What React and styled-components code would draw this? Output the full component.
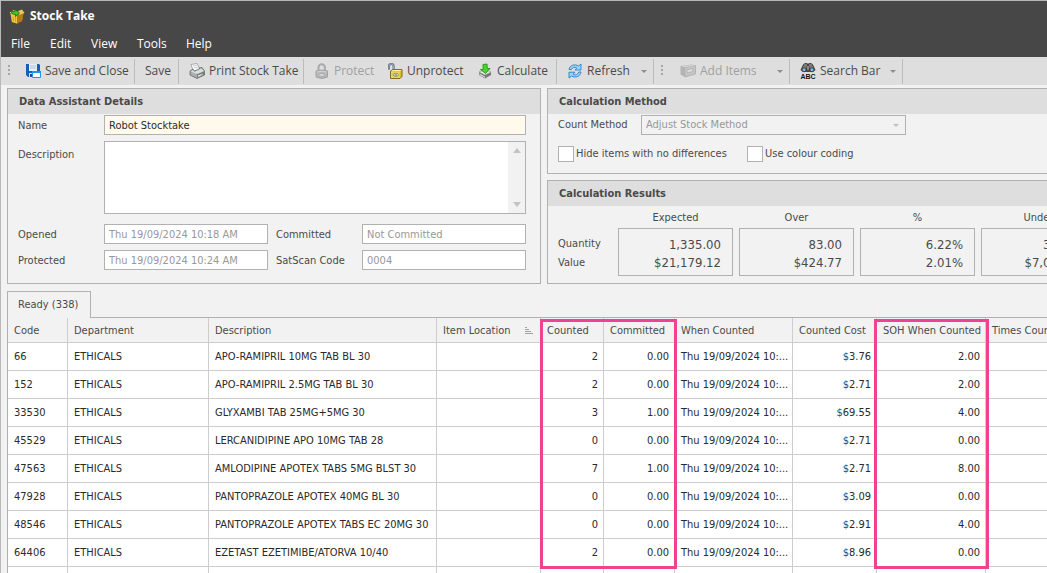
import React from 'react';
import styled, { createGlobalStyle } from 'styled-components';

const line = '#b1b1b1';
const gridLine = '#cdcdcd';
const ui = '"Segoe UI", "Open Sans", "Noto Sans", sans-serif';
const body = 'Tahoma, "DejaVu Sans Condensed", "Noto Sans", sans-serif';

const Global = createGlobalStyle`
  * { box-sizing: border-box; }
  body { margin: 0; background: #f2f2f2; overflow: hidden; }
  button, input, select, textarea { font: inherit; color: inherit; margin: 0; border-radius: 0; outline: none; }
`;

const Window = styled.div`
  height: 100vh;
  overflow: hidden;
  display: flex;
  flex-direction: column;
  border-left: 1px solid #b9b9b9;
  border-top: 1px solid #b4b8ba;
  background: #f2f2f2;
  color: #4a4a4a;
  font: 11px/16px ${body};
`;

const TitleBar = styled.header`
  display: flex;
  flex: none;
  align-items: center;
  gap: 5px;
  height: 30px;
  padding-left: 8px;
  background: #474747;
  color: #fff;
`;

const Title = styled.h1`
  margin: 0;
  font: bold 12px/16px ${ui};
`;

const MenuBar = styled.nav`
  display: flex;
  flex: none;
  height: 26px;
  background: #474747;
`;

const MenuItem = styled.button`
  flex: none;
  width: ${(p) => p.$width}px;
  padding: 0 0 0 10px;
  border: 0;
  background: none;
  color: #fff;
  text-align: left;
  font: 12px/26px ${ui};
`;

const ToolBar = styled.div`
  display: flex;
  flex: none;
  align-items: center;
  height: 28px;
  background: #dedede;
  font: 12px/16px ${ui};
`;

const Grip = styled.span`
  flex: none;
  width: ${(p) => p.$width}px;
  height: 12px;
  padding-left: 7px;
  &::before {
    content: '';
    display: block;
    width: 2px;
    height: 10px;
    background: repeating-linear-gradient(#a6a6a6 0 2px, transparent 2px 4px);
  }
`;

const Tool = styled.button`
  display: flex;
  flex: none;
  align-items: center;
  gap: 4px;
  width: ${(p) => p.$width}px;
  height: 25px;
  padding: 0 6px 0 10px;
  border: 0;
  border-right: 1px solid ${(p) => (p.$divider ? '#bcbcbc' : 'transparent')};
  background: none;
  color: ${(p) => (p.disabled ? '#a0a0a0' : '#4a4a4a')};
  white-space: nowrap;
  svg { flex: none; }
`;

const Caret = styled.span`
  margin-left: auto;
  border: 3px solid transparent;
  border-top-color: ${(p) => (p.$faint ? '#c0c0c0' : '#8e8e8e')};
  border-bottom: 0;
`;

const Panels = styled.main`
  display: flex;
  flex: none;
  gap: 6px;
  padding: 3px 0 7px 6px;
`;

const Column = styled.div`
  display: flex;
  flex-direction: column;
  gap: 6px;
  flex: ${(p) => (p.$grow ? '1 1 0' : '0 0 534px')};
  min-width: 0;
`;

const Panel = styled.section`
  flex: ${(p) => (p.$grow ? 1 : 'none')};
  border: 1px solid ${line};
  border-right-width: ${(p) => (p.$open ? 0 : 1)}px;
  overflow: hidden;
`;

const PanelTitle = styled.h2`
  margin: 0;
  height: 25px;
  padding-left: 11px;
  background: #dedede;
  color: #4a4a4a;
  font: bold 11px/25px ${body};
`;

const Details = styled.div`
  display: grid;
  grid-template-columns: 86px 1fr 94px 1fr;
  grid-template-rows: 20px 77px 20px 20px;
  row-gap: 6px;
  padding: 1px 14px 13px 10px;
`;

const Label = styled.label`
  padding-left: ${(p) => (p.$inset ? 8 : 0)}px;
  line-height: ${(p) => (p.$tall ? 28 : 21)}px;
`;

const Input = styled.input`
  grid-column: span ${(p) => p.$span || 1};
  width: 100%;
  min-width: 0;
  height: 20px;
  padding: 0 4px;
  border: 1px solid ${line};
  background: ${(p) => (p.$required ? '#fffaeb' : '#fff')};
  color: ${(p) => (p.$required ? '#2c2c2c' : '#989898')};
`;

const Memo = styled.div`
  grid-column: span 3;
  display: flex;
  height: 73px;
  border: 1px solid ${line};
  background: #fff;
`;

const MemoText = styled.textarea`
  flex: 1;
  border: 0;
  padding: 2px 4px;
  resize: none;
  background: none;
`;

const MemoScroll = styled.div`
  display: flex;
  flex-direction: column;
  justify-content: space-between;
  align-items: center;
  width: 17px;
  padding: 6px 0;
  background: #f2f2f2;
`;

const Arrow = styled.span`
  border: 4px solid transparent;
  border-${(p) => (p.$up ? 'bottom' : 'top')}: 5px solid #c3c3c3;
  border-${(p) => (p.$up ? 'top' : 'bottom')}: 0;
`;

const Method = styled.div`
  padding: 1px 0 11px 10px;
`;

const MethodRow = styled.div`
  display: flex;
  align-items: center;
`;

const MethodLabel = styled.label`
  width: 83px;
`;

const SelectBox = styled.div`
  display: flex;
  align-items: center;
  width: 265px;
  height: 20px;
  padding-right: 6px;
  border: 1px solid ${line};
`;

const Select = styled.select`
  flex: 1;
  appearance: none;
  border: 0;
  padding: 0 4px;
  background: none;
  color: #989898;
  opacity: 1;
`;

const Checks = styled.div`
  display: grid;
  grid-template-columns: 189px auto;
  justify-content: start;
  padding-top: 11px;
`;

const Check = styled.label`
  display: flex;
  align-items: center;
  gap: 2px;
`;

const Box = styled.input`
  appearance: none;
  width: 16px;
  height: 16px;
  border: 1px solid ${line};
  background: #fff;
`;

const Results = styled.div`
  display: grid;
  grid-template-columns: 54px repeat(4, 115px);
  column-gap: 6px;
  padding: 4px 0 7px 10px;
`;

const ResultHead = styled.div`
  height: 18px;
  text-align: center;
`;

const ResultLabels = styled.div`
  display: flex;
  flex-direction: column;
  padding-top: 6px;
  line-height: 19px;
`;

const ResultBox = styled.div`
  height: 48px;
  padding: 7px 11px 0;
  border: 1px solid ${line};
  text-align: right;
  font-size: 13px;
  line-height: 18px;
`;

const Tabs = styled.div`
  display: flex;
  flex: none;
  margin-left: 6px;
  height: 27px;
  &::after {
    content: '';
    flex: 1;
    border-bottom: 1px solid ${line};
  }
`;

const Tab = styled.button`
  width: 84px;
  padding: 0 0 0 10px;
  border: 1px solid ${line};
  border-bottom: 0;
  background: #f2f2f2;
  text-align: left;
`;

const GridArea = styled.div`
  position: relative;
  flex: 1;
  margin-left: 6px;
  border-left: 1px solid ${line};
  background: #fff;
`;

const Table = styled.table`
  width: 100%;
  table-layout: fixed;
  border-collapse: separate;
  border-spacing: 0;
`;

const Th = styled.th`
  height: 25px;
  padding: 1px 4px 0 6px;
  border-right: 1px solid ${gridLine};
  border-bottom: 1px solid ${gridLine};
  background: #f2f2f2;
  text-align: left;
  font-weight: normal;
  white-space: nowrap;
  &:last-child { border-right: 0; }
`;

const HeadContent = styled.span`
  display: flex;
  align-items: center;
  justify-content: space-between;
  padding-right: 2px;
`;

const Td = styled.td`
  height: 28px;
  padding: 0 5px 0 6px;
  border-right: 1px solid ${gridLine};
  border-bottom: 1px solid ${gridLine};
  color: #2a2a2a;
  text-align: ${(p) => (p.$right ? 'right' : 'left')};
  white-space: nowrap;
  &:last-child { border-right: 0; }
`;

const Currency = styled.span`
  color: #244f80;
`;

const Highlight = styled.div`
  position: absolute;
  top: 1px;
  left: ${(p) => p.$left}px;
  width: ${(p) => p.$width}px;
  height: 250px;
  border: 3px solid #ef4291;
  pointer-events: none;
`;

const Svg = ({ children, size = 16 }) => (
  <svg width={size} height={size} viewBox="0 0 16 16" aria-hidden="true">{children}</svg>
);

const BoxIcon = () => (
  <Svg>
    <path d="M1.500 5 8 7l6.500-2-1.500 8-5 2.500L3 14z" fill="#c8901c" />
    <path d="M1.500 5.500 8 7.500v8L3 14z" fill="#f0c545" />
    <path d="M8 7.500 14.500 5.500 13 13l-5 2.500z" fill="#b57a12" />
    <path d="M.5 4.500 5 2l3 1.500-2.500 3.500zM8 3.500 13 1.500l2.500 3.500-5.500 2z" fill="#ecc65a" />
    <path d="M4 8.500l.5 4.500M6.500 9v5" stroke="#d79a24" />
    <path d="M2 3.500h4V1.500l4.500 3.500-4 3.500v-2L3.500 6z" fill="#3fc431" stroke="#176f13" strokeWidth=".8" />
  </Svg>
);

const SaveIcon = () => (
  <Svg>
    <path d="M1 1h13l1 1v12H3l-2-2z" fill="#1261b5" />
    <path d="M4 1h8v7H4z" fill="#e9f0f4" />
    <path d="M5 3h6M5 5h6" stroke="#b6c0c8" />
    <path d="M4 10h5v4H4z" fill="#d7dde2" />
    <path d="M5 11h2v3H5z" fill="#1b4f86" />
    <path d="M7.500 8.500h8v6h-8z" fill="#fff" stroke="#1e96f0" />
    <path d="M7 8h9v2H7z" fill="#1e96f0" />
  </Svg>
);

const PrintIcon = () => (
  <Svg>
    <path d="M2 1.500 8 .5l3 6-6.500 2z" fill="#fff" stroke="#999" strokeWidth=".8" />
    <path d="M4 3l4-.7M5 5l4-.8" stroke="#bbb" strokeWidth=".8" />
    <path d="M1 8l3-2 1 2 5.500-2L10 5l3-.5 2.500 3.500v4L8 15.500 1 12z" fill="#a9adb0" stroke="#686868" strokeWidth=".8" />
    <path d="M1.500 8.500 8 11l7-3-3-2.500L5.500 9 4 7z" fill="#dadddf" />
    <path d="M8 11.500v3.500l7-3.500V8.500z" fill="#777" />
    <path d="M9 12.500l5-2.200v1.200l-5 2.500z" fill="#eee" />
    <path d="M12 10h2v1.500h-2z" fill="#43b852" />
  </Svg>
);

const LockIcon = () => (
  <Svg>
    <path d="M4.500 8V4.500a3.200 3.200 0 0 1 6.400 0V8" fill="none" stroke="#aaa" strokeWidth="2" />
    <path d="M2 8q5.700-2 11.500 0v6q-5.700 3-11.500 0z" fill="#b8b8b8" stroke="#a2a2a2" />
    <path d="M3 9q5-1.500 9.500 0" stroke="#d6d6d6" fill="none" />
    <ellipse cx="7.700" cy="12" rx="3" ry="1.500" fill="#d8d8d8" stroke="#999" strokeWidth=".6" />
  </Svg>
);

const UnlockIcon = () => (
  <Svg>
    <path d="M2 6.500V3.300a2.300 2.300 0 0 1 4.600 0V7" fill="none" stroke="#52636f" strokeWidth="2" />
    <path d="M2 6V3.300a2.300 2.300 0 0 1 4.600 0V6" fill="none" stroke="#b3c4cf" strokeWidth=".8" />
    <path d="M3.500 8 6 6.500h9v7L13 15.500H3.500z" fill="#d7b92d" stroke="#776416" strokeWidth=".9" />
    <path d="M4 8.300h9l1.500-1.300H6z" fill="#fff3a2" />
    <path d="M4 8.800h8.800v6.200H4z" fill="#ecd656" />
    <ellipse cx="8.700" cy="11.800" rx="2.700" ry="1.500" fill="#e9eef0" stroke="#787041" strokeWidth=".7" />
    <path d="M7.500 12h2.500" stroke="#4478aa" />
  </Svg>
);

const CalculateIcon = () => (
  <Svg>
    <path d="M2 9l5-2 7 2v3l-6 3.500L2 12z" fill="#777" />
    <path d="M2 9l6 3 6-3-6-2.500z" fill="#f1f1f1" stroke="#999" strokeWidth=".6" />
    <path d="M2.500 10.500 8 13.500v1.500l-5.500-3z" fill="#d2d2d2" />
    <path d="M6 1.500 10 1l.3 4.500H13l-4.500 5L3.500 6.500h2.700z" fill="#4bd42e" stroke="#259614" strokeWidth=".9" />
  </Svg>
);

const RefreshIcon = () => (
  <Svg>
    <path d="M2 6.500C2.500 2.500 7.500.5 11.500 3L14 1v6H8l1.800-1.900C7.500 3.700 5.500 4.200 4.500 6.500z" fill="#9bd3fb" stroke="#267fd0" strokeWidth=".9" />
    <path d="M14 9c-.5 4.500-5.500 6.300-9.500 4L2 15V9.200H8l-1.800 1.900C8.500 12.500 10.800 11.800 11.700 9z" fill="#9bd3fb" stroke="#267fd0" strokeWidth=".9" />
  </Svg>
);

const AddItemsIcon = () => (
  <Svg>
    <path d="M.5 3 12 1.500l3.500 1v8.500L5 14 .5 11.500z" fill="#b4b4b4" />
    <path d="M4.500 4.500 15.500 2.500v8.500L5 14z" fill="#c6c6c6" stroke="#aaa" strokeWidth=".7" />
    <path d="M1 3.200 12 2l3 .7L4.500 4.300z" fill="#d6d6d6" />
    <path d="M7 6.800 13 5.500v3L7 10z" fill="#dcdcdc" stroke="#aaa" strokeWidth=".7" />
  </Svg>
);

const SearchIcon = () => (
  <Svg>
    <path d="M3 1.500 5 0h2l1 1 1-1h2l2 1.500L15.500 7 13 9H3L.5 7z" fill="#4a4645" />
    <path d="M4 2h3M9 2h3M3 4h3.500M9.500 4H13" stroke="#b1aaa6" />
    <circle cx="4" cy="6.800" r="2" fill="#72bce6" stroke="#333" strokeWidth=".8" />
    <circle cx="12" cy="6.800" r="2" fill="#72bce6" stroke="#333" strokeWidth=".8" />
    <path d="M7 3h2v4H7z" fill="#8d8481" />
    <text x="8" y="16" textAnchor="middle" fontFamily="Liberation Sans, sans-serif" fontWeight="bold" fontSize="7" fill="#151515">ABC</text>
  </Svg>
);

const SortIcon = () => (
  <svg width="9" height="7" viewBox="0 0 9 7" aria-hidden="true">
    <path d="M0 .5h2M0 2.500h4M0 4.500h6M0 6.500h8" stroke="#a3a3a3" />
  </svg>
);

const menus = [['File', 39], ['Edit', 41], ['View', 46], ['Tools', 49], ['Help', 50]];

const tools = [
  { text: 'Save and Close', Icon: SaveIcon, width: 120, divider: true },
  { text: 'Save', width: 44, divider: true },
  { text: 'Print Stock Take', Icon: PrintIcon, width: 125, divider: true },
  { text: 'Protect', Icon: LockIcon, width: 73, disabled: true },
  { text: 'Unprotect', Icon: UnlockIcon, width: 90 },
  { text: 'Calculate', Icon: CalculateIcon, width: 90, divider: true },
  { text: 'Refresh', Icon: RefreshIcon, width: 97, divider: true, menu: true },
  { grip: true },
  { text: 'Add Items', Icon: AddItemsIcon, width: 120, divider: true, disabled: true, menu: true },
  { text: 'Search Bar', Icon: SearchIcon, width: 113, divider: true, menu: true },
];

const results = [
  ['Expected', '1,335.00', '$21,179.12'],
  ['Over', '83.00', '$424.77'],
  ['%', '6.22%', '2.01%'],
  ['Under', '354.00', '$7,041.50'],
];

const columns = [
  ['Code', 60], ['Department', 141], ['Description', 228], ['Item Location', 104], ['Counted', 63],
  ['Committed', 71], ['When Counted', 118], ['Counted Cost', 84], ['SOH When Counted', 109], ['Times Cour', null],
];

const when = 'Thu 19/09/2024 10:...';
const items = [
  ['66', 'APO-RAMIPRIL 10MG TAB BL 30', '2', '0.00', '3.76', '2.00'],
  ['152', 'APO-RAMIPRIL 2.5MG TAB BL 30', '2', '0.00', '2.71', '2.00'],
  ['33530', 'GLYXAMBI TAB 25MG+5MG 30', '3', '1.00', '69.55', '4.00'],
  ['45529', 'LERCANIDIPINE APO 10MG TAB 28', '0', '0.00', '2.71', '0.00'],
  ['47563', 'AMLODIPINE APOTEX TABS 5MG BLST 30', '7', '1.00', '2.71', '8.00'],
  ['47928', 'PANTOPRAZOLE APOTEX 40MG BL 30', '0', '0.00', '3.09', '0.00'],
  ['48546', 'PANTOPRAZOLE APOTEX TABS EC 20MG 30', '0', '0.00', '2.91', '4.00'],
  ['64406', 'EZETAST EZETIMIBE/ATORVA 10/40', '2', '0.00', '8.96', '0.00'],
];

export default function App() {
  return (
    <Window>
      <Global />
      <TitleBar><BoxIcon /><Title>Stock Take</Title></TitleBar>
      <MenuBar>
        {menus.map(([text, width]) => <MenuItem key={text} $width={width}>{text}</MenuItem>)}
      </MenuBar>
      <ToolBar>
        <Grip $width={14} />
        {tools.map(({ text, Icon, width, divider, disabled, menu, grip }) => grip
          ? <Grip key="grip" $width={16} />
          : (
            <Tool key={text} $width={width} $divider={divider} disabled={disabled}>
              {Icon && <Icon />}{text}{menu && <Caret />}
            </Tool>
          ))}
      </ToolBar>
      <Panels>
        <Column>
          <Panel $grow>
            <PanelTitle>Data Assistant Details</PanelTitle>
            <Details>
              <Label htmlFor="name">Name</Label>
              <Input id="name" $span={3} $required defaultValue="Robot Stocktake" />
              <Label htmlFor="description" $tall>Description</Label>
              <Memo>
                <MemoText id="description" />
                <MemoScroll><Arrow $up /><Arrow /></MemoScroll>
              </Memo>
              <Label htmlFor="opened">Opened</Label>
              <Input id="opened" readOnly value="Thu 19/09/2024 10:18 AM" />
              <Label htmlFor="committed" $inset>Committed</Label>
              <Input id="committed" readOnly value="Not Committed" />
              <Label htmlFor="protected">Protected</Label>
              <Input id="protected" readOnly value="Thu 19/09/2024 10:24 AM" />
              <Label htmlFor="satscan" $inset>SatScan Code</Label>
              <Input id="satscan" readOnly value="0004" />
            </Details>
          </Panel>
        </Column>
        <Column $grow>
          <Panel $open>
            <PanelTitle>Calculation Method</PanelTitle>
            <Method>
              <MethodRow>
                <MethodLabel htmlFor="method">Count Method</MethodLabel>
                <SelectBox>
                  <Select id="method" disabled><option>Adjust Stock Method</option></Select>
                  <Caret $faint />
                </SelectBox>
              </MethodRow>
              <Checks>
                <Check><Box type="checkbox" />Hide items with no differences</Check>
                <Check><Box type="checkbox" />Use colour coding</Check>
              </Checks>
            </Method>
          </Panel>
          <Panel $open $grow>
            <PanelTitle>Calculation Results</PanelTitle>
            <Results>
              <span />
              {results.map(([name]) => <ResultHead key={name}>{name}</ResultHead>)}
              <ResultLabels><span>Quantity</span><span>Value</span></ResultLabels>
              {results.map(([name, quantity, value]) => (
                <ResultBox key={name}><div>{quantity}</div><div>{value}</div></ResultBox>
              ))}
            </Results>
          </Panel>
        </Column>
      </Panels>
      <Tabs><Tab>Ready (338)</Tab></Tabs>
      <GridArea>
        <Table>
          <colgroup>
            {columns.map(([name, width]) => <col key={name} width={width || undefined} />)}
          </colgroup>
          <thead>
            <tr>
              {columns.map(([name]) => (
                <Th key={name}>
                  {name === 'Item Location' ? <HeadContent>{name}<SortIcon /></HeadContent> : name}
                </Th>
              ))}
            </tr>
          </thead>
          <tbody>
            {items.map(([code, description, counted, committed, cost, soh]) => (
              <tr key={code}>
                <Td>{code}</Td>
                <Td>ETHICALS</Td>
                <Td>{description}</Td>
                <Td />
                <Td $right>{counted}</Td>
                <Td $right>{committed}</Td>
                <Td>{when}</Td>
                <Td $right><Currency>$</Currency>{cost}</Td>
                <Td $right>{soh}</Td>
                <Td />
              </tr>
            ))}
            <tr>{columns.map(([name]) => <Td key={name} />)}</tr>
          </tbody>
        </Table>
        <Highlight $left={532} $width={137} />
        <Highlight $left={866} $width={115} />
      </GridArea>
    </Window>
  );
}
